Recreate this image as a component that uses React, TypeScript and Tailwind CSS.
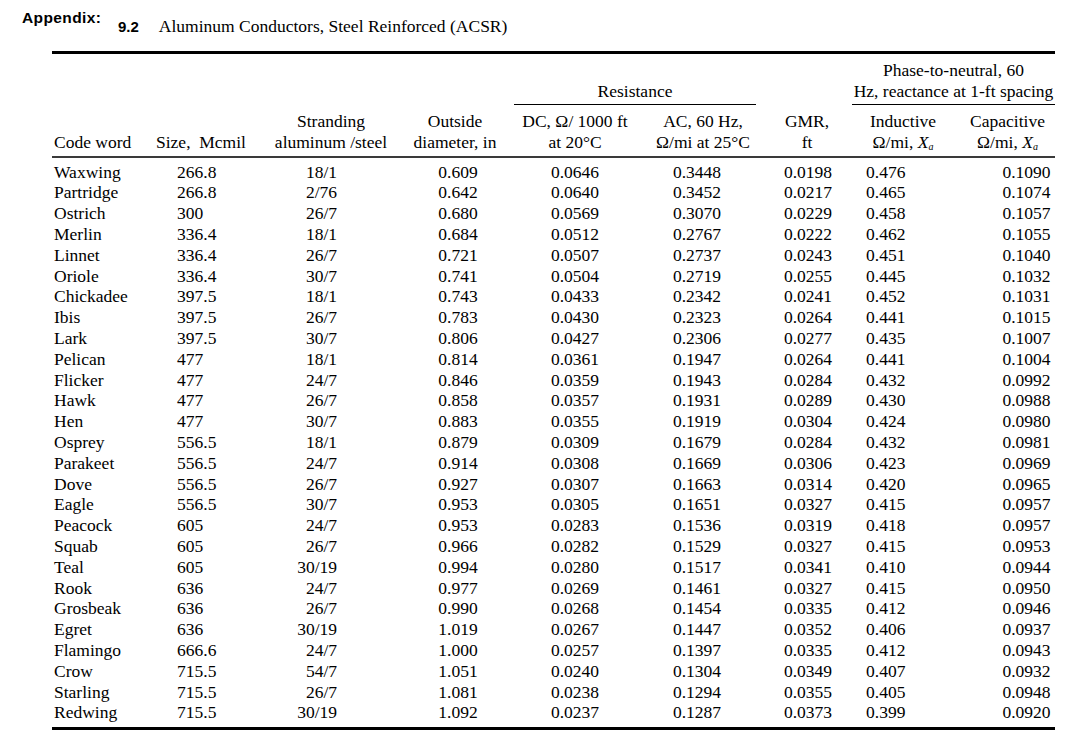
import React from 'react';

type Row = [string, string, string, string, string, string, string, string, string];

const rows: Row[] = [
    ['Waxwing', '266.8', '18/1', '0.609', '0.0646', '0.3448', '0.0198', '0.476', '0.1090'],
    ['Partridge', '266.8', '2/76', '0.642', '0.0640', '0.3452', '0.0217', '0.465', '0.1074'],
    ['Ostrich', '300', '26/7', '0.680', '0.0569', '0.3070', '0.0229', '0.458', '0.1057'],
    ['Merlin', '336.4', '18/1', '0.684', '0.0512', '0.2767', '0.0222', '0.462', '0.1055'],
    ['Linnet', '336.4', '26/7', '0.721', '0.0507', '0.2737', '0.0243', '0.451', '0.1040'],
    ['Oriole', '336.4', '30/7', '0.741', '0.0504', '0.2719', '0.0255', '0.445', '0.1032'],
    ['Chickadee', '397.5', '18/1', '0.743', '0.0433', '0.2342', '0.0241', '0.452', '0.1031'],
    ['Ibis', '397.5', '26/7', '0.783', '0.0430', '0.2323', '0.0264', '0.441', '0.1015'],
    ['Lark', '397.5', '30/7', '0.806', '0.0427', '0.2306', '0.0277', '0.435', '0.1007'],
    ['Pelican', '477', '18/1', '0.814', '0.0361', '0.1947', '0.0264', '0.441', '0.1004'],
    ['Flicker', '477', '24/7', '0.846', '0.0359', '0.1943', '0.0284', '0.432', '0.0992'],
    ['Hawk', '477', '26/7', '0.858', '0.0357', '0.1931', '0.0289', '0.430', '0.0988'],
    ['Hen', '477', '30/7', '0.883', '0.0355', '0.1919', '0.0304', '0.424', '0.0980'],
    ['Osprey', '556.5', '18/1', '0.879', '0.0309', '0.1679', '0.0284', '0.432', '0.0981'],
    ['Parakeet', '556.5', '24/7', '0.914', '0.0308', '0.1669', '0.0306', '0.423', '0.0969'],
    ['Dove', '556.5', '26/7', '0.927', '0.0307', '0.1663', '0.0314', '0.420', '0.0965'],
    ['Eagle', '556.5', '30/7', '0.953', '0.0305', '0.1651', '0.0327', '0.415', '0.0957'],
    ['Peacock', '605', '24/7', '0.953', '0.0283', '0.1536', '0.0319', '0.418', '0.0957'],
    ['Squab', '605', '26/7', '0.966', '0.0282', '0.1529', '0.0327', '0.415', '0.0953'],
    ['Teal', '605', '30/19', '0.994', '0.0280', '0.1517', '0.0341', '0.410', '0.0944'],
    ['Rook', '636', '24/7', '0.977', '0.0269', '0.1461', '0.0327', '0.415', '0.0950'],
    ['Grosbeak', '636', '26/7', '0.990', '0.0268', '0.1454', '0.0335', '0.412', '0.0946'],
    ['Egret', '636', '30/19', '1.019', '0.0267', '0.1447', '0.0352', '0.406', '0.0937'],
    ['Flamingo', '666.6', '24/7', '1.000', '0.0257', '0.1397', '0.0335', '0.412', '0.0943'],
    ['Crow', '715.5', '54/7', '1.051', '0.0240', '0.1304', '0.0349', '0.407', '0.0932'],
    ['Starling', '715.5', '26/7', '1.081', '0.0238', '0.1294', '0.0355', '0.405', '0.0948'],
    ['Redwing', '715.5', '30/19', '1.092', '0.0237', '0.1287', '0.0373', '0.399', '0.0920'],
];

// column widths shared by every grid row of the table
const cols = 'grid grid-cols-[98px_112px_138px_110px_130px_120px_92px_108px_95px]';

// alignment of each body column
const cellClass = [
    'pl-[2px] text-left',
    'pl-[27px] text-left',
    'pr-[63px] text-right',
    'pl-[6px] text-center',
    'text-center',
    'pr-[6px] text-center',
    'pl-[4px] text-center',
    'pl-[14px] text-left',
    'pl-[38px] text-center',
];

function Xa() {
    return (
        <>
            <span className="italic">X</span>
            <sub className="italic text-[10px]">a</sub>
        </>
    );
}

export default function App() {
    return (
        <div className="w-[1079px] h-[744px] bg-white text-black pt-[11px] leading-none font-['Liberation_Serif','Times_New_Roman',serif]">
            {/* Page heading */}
            <div className="flex items-start">
                <div className="w-[118px] pl-[22px] text-[15.5px] leading-[14px] tracking-[0.4px] font-bold font-['Liberation_Sans',Arial,sans-serif]">
                    Appendix:
                </div>
                <div className="mt-[5px] flex items-baseline gap-[20px]">
                    <span className="text-[15px] leading-[15px] font-bold font-['Liberation_Sans',Arial,sans-serif]">9.2</span>
                    <span className="text-[17.5px] leading-[20px]">Aluminum Conductors, Steel Reinforced (ACSR)</span>
                </div>
            </div>

            {/* Table */}
            <div className="ml-[52px] w-[1003px] mt-[15px] border-t-[3px] border-black text-[17.5px] leading-[20.8px]">
                {/* Spanning headers */}
                <div className={`${cols} pt-[6px]`}>
                    <div className="col-start-5 col-span-2 flex flex-col justify-end">
                        <div className="mx-[4px] pb-[2px] border-b border-black text-center">Resistance</div>
                    </div>
                    <div className="col-start-8 col-span-2 pb-[2px] border-b border-black text-center">
                        <div>Phase-to-neutral, 60</div>
                        <div>Hz, reactance at 1-ft spacing</div>
                    </div>
                </div>

                {/* Column headers */}
                <div className={`${cols} items-end pt-[6px] pb-[3px] leading-[21px] border-b-[2px] border-[#3a3a3a]`}>
                    <div className="pl-[2px]">Code word</div>
                    <div className="pl-[6px]">Size,&nbsp; Mcmil</div>
                    <div className="text-center">
                        <div>Stranding</div>
                        <div>aluminum /steel</div>
                    </div>
                    <div className="text-center">
                        <div>Outside</div>
                        <div>diameter, in</div>
                    </div>
                    <div className="text-center">
                        <div>DC, Ω/ 1000 ft</div>
                        <div>at 20°C</div>
                    </div>
                    <div className="text-center pl-[6px]">
                        <div>AC, 60 Hz,</div>
                        <div>Ω/mi at 25°C</div>
                    </div>
                    <div className="text-center pl-[2px]">
                        <div>GMR,</div>
                        <div>ft</div>
                    </div>
                    <div className="text-center pr-[6px]">
                        <div>Inductive</div>
                        <div>
                            Ω/mi, <Xa />
                        </div>
                    </div>
                    <div className="text-center">
                        <div>Capacitive</div>
                        <div>
                            Ω/mi, <Xa />
                        </div>
                    </div>
                </div>

                {/* Body */}
                <div className="pt-[4px] pb-[4px] border-b-[3px] border-black">
                    {rows.map((row) => (
                        <div key={row[0]} className={`${cols} h-[20.8px]`}>
                            {row.map((value, i) => (
                                <div key={i} className={cellClass[i]}>
                                    {value}
                                </div>
                            ))}
                        </div>
                    ))}
                </div>
            </div>
        </div>
    );
}
